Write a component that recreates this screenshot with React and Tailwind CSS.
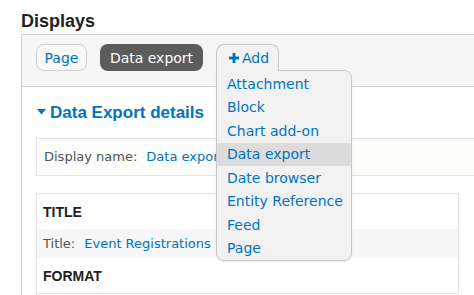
const items = [
  "Attachment",
  "Block",
  "Chart add-on",
  "Data export",
  "Date browser",
  "Entity Reference",
  "Feed",
  "Page",
];

function AddMenu() {
  return (
    <div className="relative">
      <div className="relative z-10 flex h-[27px] w-[63px] items-center gap-[3px] rounded-t-[8px] border-x border-t border-[#c8c8c8] bg-[#f2f2f2] pl-[12px] text-[#0074bd]">
        <svg width="10" height="10" viewBox="0 0 10 10">
          <rect x="3.6" y="0" width="2.8" height="10" fill="#0074bd" />
          <rect x="0" y="3.6" width="10" height="2.8" fill="#0074bd" />
        </svg>
        <span>Add</span>
      </div>
      <div className="absolute left-0 top-[26px] w-[136px] rounded-b-[8px] rounded-tr-[8px] border border-[#c8c8c8] bg-[#f2f2f2] pt-px shadow-[0_1px_2px_rgba(0,0,0,0.08)]">
        {items.map((it) => (
          <div
            key={it}
            className={
              "flex h-[23.5px] items-center pl-[10px] text-[#0074bd] " +
              (it === "Data export" ? "bg-[#dcdcdc]" : "")
            }
          >
            {it}
          </div>
        ))}
      </div>
    </div>
  );
}

export default function App() {
  return (
    <div className="h-[295px] w-[474px] overflow-hidden bg-white font-['DejaVu_Sans',sans-serif] text-[14px] leading-[18px] text-[#333]">
      <h1 className="h-[34px] pl-[21px] pt-[11px] font-['Liberation_Sans',sans-serif] text-[18px] font-bold leading-[20px] text-[#222]">
        Displays
      </h1>

      <div className="ml-[21px] h-[300px] border-l border-t border-[#cfcfcf]">
        <div className="flex h-[52px] items-start gap-[13px] border-b border-[#cfcfcf] bg-[#f6f6f6] pl-[14px] pt-[9px]">
          <div className="flex h-[27px] w-[51px] items-center justify-center rounded-[8px] border border-[#cdcdcd] bg-[#f8f8f6] text-[#0074bd]">
            Page
          </div>
          <div className="flex h-[27px] w-[103px] items-center justify-center rounded-[8px] bg-[#5c5c5c] text-white">
            Data export
          </div>
          <AddMenu />
        </div>

        <div className="pl-[14px]">
          <div className="flex h-[51px] items-center gap-[4px] font-['Liberation_Sans',sans-serif] text-[17px] font-bold text-[#0074bd]">
            <svg width="9" height="6" viewBox="0 0 9 6" className="ml-[1px] mt-[-1px]">
              <polygon points="0,0 9,0 4.5,5.5" fill="#0074bd" />
            </svg>
            <span>Data Export details</span>
          </div>

          <div className="flex h-[38px] items-center border-y border-l border-[#e4e4e4] bg-[#fcfcfa] pl-[7px] text-[13px]">
            <span className="text-[#555]">Display name:</span>
            <span className="ml-[9px] text-[#0074bd]">Data export</span>
          </div>

          <div className="mt-[17px] w-[423px] border border-[#e4e4e4]">
            <div className="flex h-[35px] items-center pl-[6px] font-['Liberation_Sans',sans-serif] text-[14px] font-bold text-[#222]">
              TITLE
            </div>
            <div className="flex h-[29px] items-center bg-[#f7f7f7] pl-[6px] text-[13px]">
              <span className="text-[#555]">Title:</span>
              <span className="ml-[9px] text-[#0074bd]">Event Registrations</span>
            </div>
            <div className="flex h-[35px] items-center pl-[6px] font-['Liberation_Sans',sans-serif] text-[14px] font-bold text-[#222]">
              FORMAT
            </div>
          </div>
        </div>
      </div>
    </div>
  );
}
